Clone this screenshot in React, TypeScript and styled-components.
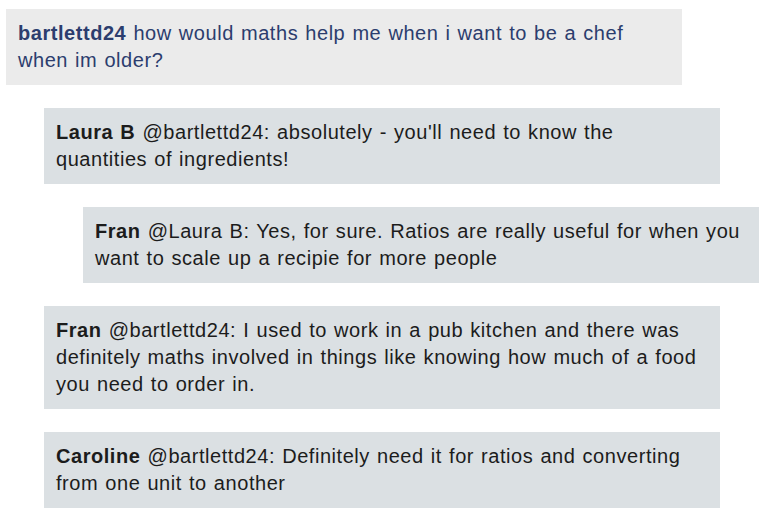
import React from 'react'
import styled, { createGlobalStyle } from 'styled-components'

const GlobalStyle = createGlobalStyle`
  html, body {
    margin: 0;
    padding: 0;
    background: #ffffff;
  }
`

const Thread = styled.div`
  display: flex;
  flex-direction: column;
  gap: 23px;
  padding-top: 9px;
  font-family: 'Liberation Sans', Arial, Helvetica, sans-serif;
  font-size: 20px;
  line-height: 27px;
  letter-spacing: 0.55px;
  word-spacing: 1px;
`
Thread.displayName = 'Thread'

const indents = [6, 44, 83]

const Comment = styled.div<{ $depth: number; $root?: boolean }>`
  box-sizing: border-box;
  width: 676px;
  margin-left: ${(p) => indents[p.$depth]}px;
  padding: 11px 12px;
  background: ${(p) => (p.$root ? '#ebebeb' : '#dbe0e3')};
  color: ${(p) => (p.$root ? '#2c3d6e' : '#1c1c1c')};

  strong {
    font-weight: bold;
  }
`
Comment.displayName = 'Comment'

interface Post {
  author: string
  text: string
  depth: number
  root?: boolean
}

const posts: Post[] = [
  {
    author: 'bartlettd24',
    text: 'how would maths help me when i want to be a chef when im older?',
    depth: 0,
    root: true
  },
  {
    author: 'Laura B',
    text: "@bartlettd24: absolutely - you'll need to know the quantities of ingredients!",
    depth: 1
  },
  {
    author: 'Fran',
    text: '@Laura B: Yes, for sure. Ratios are really useful for when you want to scale up a recipie for more people',
    depth: 2
  },
  {
    author: 'Fran',
    text: '@bartlettd24: I used to work in a pub kitchen and there was definitely maths involved in things like knowing how much of a food you need to order in.',
    depth: 1
  },
  {
    author: 'Caroline',
    text: '@bartlettd24: Definitely need it for ratios and converting from one unit to another',
    depth: 1
  }
]

const App: React.FC = (): JSX.Element => {
  return (
    <>
      <GlobalStyle />
      <Thread>
        {posts.map((post, i) => (
          <Comment key={i} $depth={post.depth} $root={post.root}>
            <strong>{post.author}</strong> {post.text}
          </Comment>
        ))}
      </Thread>
    </>
  )
}

export default App
